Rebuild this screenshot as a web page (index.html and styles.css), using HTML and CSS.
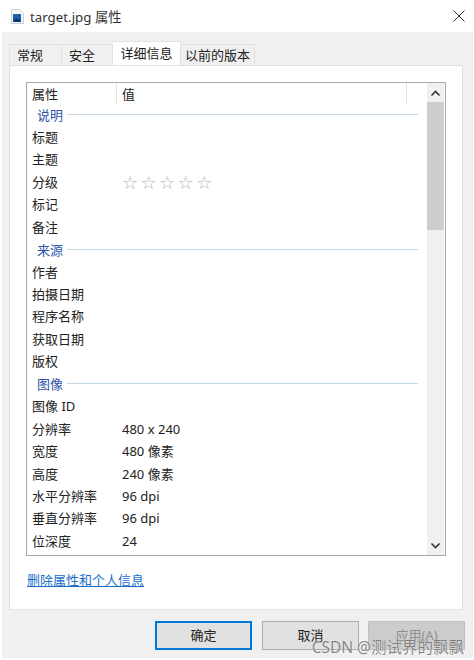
FILE: index.html
```html
<!DOCTYPE html>
<html lang="zh-CN">
<head>
    <meta charset="UTF-8">
    <title>target.jpg 属性</title>
    <link rel="stylesheet" href="styles.css">
</head>
<body>
    <div class="window">
        <div class="titlebar">
            <svg class="file-icon" width="13" height="15" viewBox="0 0 13 15">
                <path d="M.5 .5h8l4 4v10h-12z" fill="#f4f6f8" stroke="#c9d0d6"/>
                <rect x="2" y="5" width="8" height="8" fill="#1d5fa8"/>
                <path d="M2 13l3-4 2 2 1.500-1.500 1.500 3.500z" fill="#0c3568"/>
            </svg>
            <span class="title">target.jpg 属性</span>
            <svg class="close" width="12" height="12" viewBox="0 0 12 12">
                <path d="M.5 .5l11 11M11.500 .5l-11 11" stroke="#333" fill="none"/>
            </svg>
        </div>
        <div class="body">
            <div class="tabs">
                <div class="tab tab-first">常规</div>
                <div class="tab tab-second">安全</div>
                <div class="tab tab-active">详细信息</div>
                <div class="tab tab-last">以前的版本</div>
            </div>
            <div class="panel">
                <div class="list">
                    <div class="list-content">
                        <div class="header">
                            <div class="head-name">属性</div>
                            <div class="head-value">值</div>
                        </div>
                        <div class="group"><span>说明</span><i></i></div>
                        <div class="row"><div>标题</div><div></div></div>
                        <div class="row"><div>主题</div><div></div></div>
                        <div class="row"><div>分级</div><div class="stars">☆☆☆☆☆</div></div>
                        <div class="row"><div>标记</div><div></div></div>
                        <div class="row"><div>备注</div><div></div></div>
                        <div class="group"><span>来源</span><i></i></div>
                        <div class="row"><div>作者</div><div></div></div>
                        <div class="row"><div>拍摄日期</div><div></div></div>
                        <div class="row"><div>程序名称</div><div></div></div>
                        <div class="row"><div>获取日期</div><div></div></div>
                        <div class="row"><div>版权</div><div></div></div>
                        <div class="group"><span>图像</span><i></i></div>
                        <div class="row"><div>图像 ID</div><div></div></div>
                        <div class="row"><div>分辨率</div><div>480 x 240</div></div>
                        <div class="row"><div>宽度</div><div>480 像素</div></div>
                        <div class="row"><div>高度</div><div>240 像素</div></div>
                        <div class="row"><div>水平分辨率</div><div>96 dpi</div></div>
                        <div class="row"><div>垂直分辨率</div><div>96 dpi</div></div>
                        <div class="row"><div>位深度</div><div>24</div></div>
                    </div>
                    <div class="scrollbar">
                        <svg class="arrow" width="17" height="19" viewBox="0 0 17 19">
                            <path d="M4.500 12.500l4-4 4 4" stroke="#333" stroke-width="1.600" fill="none"/>
                        </svg>
                        <div class="thumb"></div>
                        <div class="track"></div>
                        <svg class="arrow" width="17" height="19" viewBox="0 0 17 19">
                            <path d="M4.500 7.500l4 4 4-4" stroke="#333" stroke-width="1.600" fill="none"/>
                        </svg>
                    </div>
                </div>
                <a class="remove-link" href="#">删除属性和个人信息</a>
            </div>
            <div class="buttons">
                <div class="btn btn-default">确定</div>
                <div class="btn">取消</div>
                <div class="btn btn-disabled">应用(A)</div>
            </div>
            <div class="watermark">CSDN @测试界的飘飘</div>
        </div>
    </div>
</body>
</html>
```
FILE: styles.css
```css
* {
    box-sizing: border-box;
}

html, body {
    margin: 0;
    padding: 0;
    background: #fff;
}

.window {
    width: 474px;
    height: 660px;
    overflow: hidden;
    font-family: "Noto Sans", "Noto Sans CJK SC", sans-serif;
    font-size: 13px;
    color: #222;
}

.titlebar {
    height: 32px;
    display: flex;
    align-items: center;
    padding: 0 9px 0 11px;
}

.file-icon {
    margin-right: 6px;
}

.title {
    flex: 1;
    font-size: 13.3px;
    color: #333;
}

.body {
    position: relative;
    height: 626px;
    margin: 0 1px 0 2px;
    background: #f0f0f0;
    padding: 11px 8px 0 7px;
}

.tabs {
    display: flex;
    height: 22px;
    align-items: flex-end;
}

.tab {
    height: 21px;
    line-height: 20px;
    text-align: center;
    background: #f0f0f0;
    border: 1px solid #e2e2e2;
    border-bottom: 0;
    border-left: 0;
}

.tab-first {
    width: 53px;
    padding-left: 7px;
    text-align: left;
    border-left: 1px solid #e2e2e2;
}

.tab-second {
    width: 51px;
    padding-left: 7px;
    text-align: left;
}

.tab-active {
    width: 68px;
    height: 24px;
    margin-top: -2px;
    line-height: 22px;
    background: #fff;
    position: relative;
    z-index: 1;
}

.tab-last {
    width: 74px;
}

.panel {
    height: 545px;
    margin-right: 2px;
    background: #fff;
    border: 1px solid #e2e2e2;
    padding: 16px 0 0 16px;
}

.list {
    display: flex;
    width: 420px;
    height: 474px;
    border: 1px solid #a8a8a8;
    overflow: hidden;
}

.list-content {
    flex: 1;
}

.header {
    display: flex;
    height: 20.5px;
    line-height: 22px;
}

.head-name {
    width: 90px;
    padding-left: 5px;
    border-right: 1px solid #e5e5e5;
}

.head-value {
    width: 290px;
    padding-left: 5px;
    border-right: 1px solid #e5e5e5;
}

.row {
    display: grid;
    grid-template-columns: 90px 1fr;
    height: 22.45px;
    line-height: 23px;
    padding-left: 5px;
}

.group {
    display: flex;
    align-items: center;
    height: 22.45px;
    padding: 0 9px 0 10px;
    color: #2f55a8;
}

.group i {
    flex: 1;
    height: 1px;
    margin-left: 4px;
    background: #c5d8e6;
}

.stars {
    font-family: "DejaVu Sans", sans-serif;
    font-size: 18px;
    letter-spacing: 2.400px;
    line-height: 23px;
    color: #b4b4b4;
}

.scrollbar {
    width: 17px;
    margin-right: 1px;
    display: flex;
    flex-direction: column;
    background: #f0f0f0;
}

.arrow {
    flex: none;
}

.thumb {
    height: 128px;
    background: #cdcdcd;
}

.track {
    flex: 1;
}

.remove-link {
    display: block;
    margin: 14px 0 0 1px;
    line-height: 20px;
    color: #1a70c8;
}

.buttons {
    display: flex;
    justify-content: flex-end;
    gap: 9px;
    margin-top: 11px;
}

.btn {
    width: 97px;
    height: 29px;
    line-height: 26px;
    text-align: center;
    background: #e1e1e1;
    border: 1px solid #adadad;
}

.btn-default {
    margin-right: 1px;
    border: 2px solid #0078d7;
    line-height: 24px;
}

.btn-disabled {
    background: #cccccc;
    border-color: #bfbfbf;
    color: #8f8f8f;
}

.watermark {
    position: absolute;
    right: 9px;
    bottom: 0;
    font-size: 15.500px;
    color: rgba(90, 90, 90, 0.75);
    text-shadow: 0 0 1px #fff;
}
```
